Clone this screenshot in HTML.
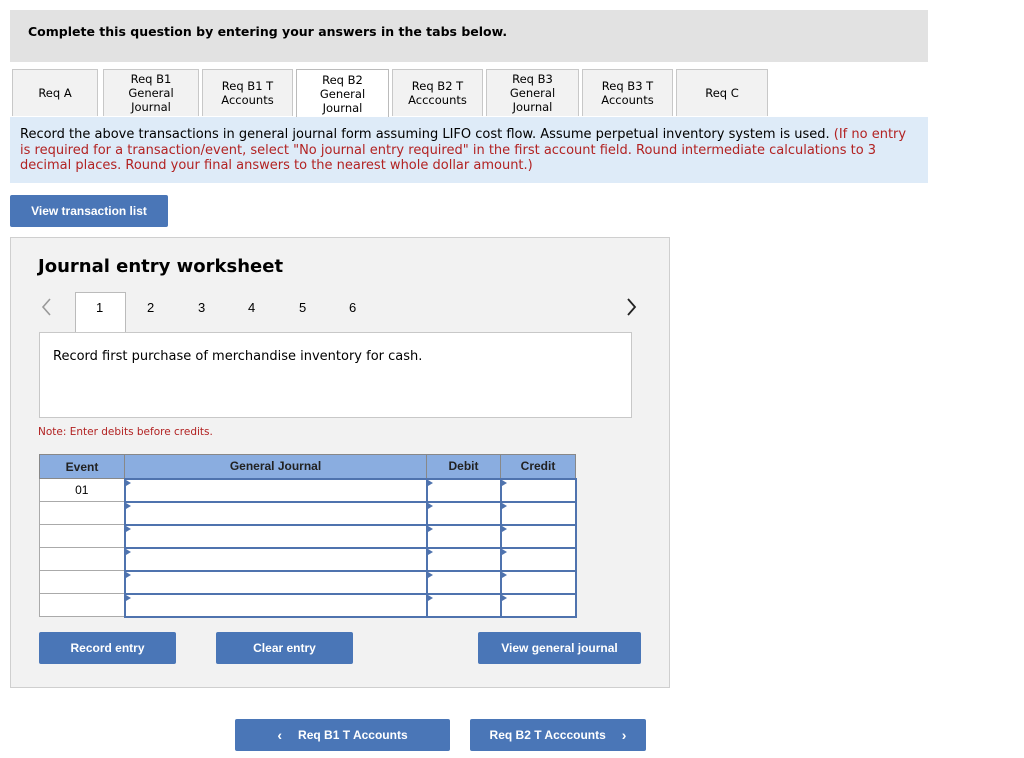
<!DOCTYPE html>
<html><head><meta charset="utf-8"><style>
*{margin:0;padding:0;box-sizing:border-box}
body{width:1024px;height:758px;background:#fff;position:relative;font-family:"DejaVu Sans","Liberation Sans",sans-serif;color:#000;overflow:hidden}
.a{position:absolute}
.hdr{left:10px;top:10px;width:918px;height:52px;background:#e2e2e2;font-weight:bold;font-size:12.5px;padding:14px 0 0 18px}
.tab{position:absolute;top:69px;height:47px;background:#f2f2f2;border:1px solid #c8c8c8;border-bottom:none;font-size:11.5px;line-height:14px;display:flex;align-items:center;justify-content:center;text-align:center}
.tab.act{background:#fff;height:49px;border-color:#bbb}
.info{left:10px;top:117px;width:918px;height:66px;background:#deebf8;font-size:13px;line-height:15.5px;padding:10px 10px 0 10px}
.red{color:#b22222}
.btn{position:absolute;background:#4a76b7;color:#fff;font-family:"Liberation Sans",sans-serif;font-weight:bold;font-size:12px;display:flex;align-items:center;justify-content:center;border-radius:2px}
.ws{left:10px;top:237px;width:660px;height:451px;background:#f2f2f2;border:1px solid #cfcfcf}
.num{position:absolute;top:300px;font-family:"Liberation Sans",sans-serif;font-size:13px}
table{position:absolute;left:39px;top:454px;border-collapse:collapse;font-family:"Liberation Sans",sans-serif;font-size:12px}
th{background:#8aade0;height:24px;border:1px solid #888;font-weight:bold;color:#222}
td{height:23px;border:1px solid #aaa;background:#fff}
td.f{border:2px solid #4f73ae;position:relative}
td.f:before{content:"";position:absolute;left:0;top:0;border-left:5px solid #4f73ae;border-top:3px solid transparent;border-bottom:3px solid transparent}
</style></head><body>
<div class="a hdr">Complete this question by entering your answers in the tabs below.</div>
<div class="tab" style="left:12px;width:86px">Req A</div>
<div class="tab" style="left:103px;width:96px">Req B1<br>General<br>Journal</div>
<div class="tab" style="left:202px;width:91px">Req B1 T<br>Accounts</div>
<div class="tab act" style="left:296px;width:93px">Req B2<br>General<br>Journal</div>
<div class="tab" style="left:392px;width:91px">Req B2 T<br>Acccounts</div>
<div class="tab" style="left:486px;width:93px">Req B3<br>General<br>Journal</div>
<div class="tab" style="left:582px;width:91px">Req B3 T<br>Accounts</div>
<div class="tab" style="left:676px;width:92px">Req C</div>
<div class="a info">Record the above transactions in general journal form assuming LIFO cost flow. Assume perpetual inventory system is used. <span class="red">(If no entry is required for a transaction/event, select "No journal entry required" in the first account field. Round intermediate calculations to 3 decimal places. Round your final answers to the nearest whole dollar amount.)</span></div>
<div class="btn" style="left:10px;top:195px;width:158px;height:32px">View transaction list</div>
<div class="a ws"></div>
<div class="a" style="left:38px;top:256px;font-size:18px;font-weight:bold">Journal entry worksheet</div>
<svg class="a" style="left:40px;top:298px" width="12" height="18"><path d="M10 1 L3 9 L10 17" fill="none" stroke="#999" stroke-width="1.6"/></svg>
<svg class="a" style="left:626px;top:298px" width="12" height="18"><path d="M2 1 L9 9 L2 17" fill="none" stroke="#222" stroke-width="1.8"/></svg>
<div class="a" style="left:75px;top:292px;width:51px;height:42px;background:#fff;border:1px solid #bbb;border-bottom:none"></div>
<div class="num" style="left:96px">1</div><div class="num" style="left:147px">2</div><div class="num" style="left:198px">3</div><div class="num" style="left:248px">4</div><div class="num" style="left:299px">5</div><div class="num" style="left:349px">6</div>
<div class="a" style="left:39px;top:332px;width:593px;height:86px;background:#fff;border:1px solid #c8c8c8;font-size:13px;padding:16px 0 0 13px">Record first purchase of merchandise inventory for cash.</div>
<div class="a red" style="left:38px;top:426px;font-size:10.5px">Note: Enter debits before credits.</div>
<table>
<tr><th style="width:85px">Event</th><th style="width:302px">General Journal</th><th style="width:74px">Debit</th><th style="width:75px">Credit</th></tr>
<tr><td style="text-align:center">01</td><td class="f"></td><td class="f"></td><td class="f"></td></tr>
<tr><td></td><td class="f"></td><td class="f"></td><td class="f"></td></tr>
<tr><td></td><td class="f"></td><td class="f"></td><td class="f"></td></tr>
<tr><td></td><td class="f"></td><td class="f"></td><td class="f"></td></tr>
<tr><td></td><td class="f"></td><td class="f"></td><td class="f"></td></tr>
<tr><td></td><td class="f"></td><td class="f"></td><td class="f"></td></tr>
</table>
<div class="btn" style="left:39px;top:632px;width:137px;height:32px">Record entry</div>
<div class="btn" style="left:216px;top:632px;width:137px;height:32px">Clear entry</div>
<div class="btn" style="left:478px;top:632px;width:163px;height:32px">View general journal</div>
<div class="btn" style="left:235px;top:719px;width:215px;height:32px"><span style="margin-right:16px;font-size:14px">&#8249;</span>Req B1 T Accounts</div>
<div class="btn" style="left:470px;top:719px;width:176px;height:32px">Req B2 T Acccounts<span style="margin-left:16px;font-size:14px">&#8250;</span></div>
</body></html>
